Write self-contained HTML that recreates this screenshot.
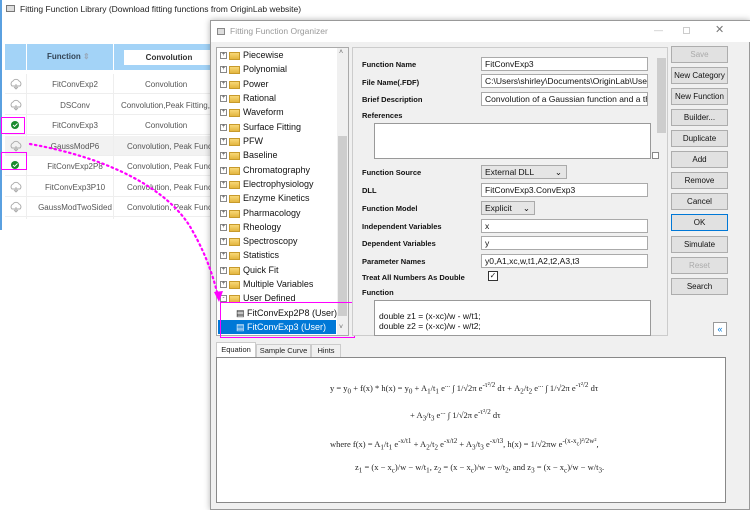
<!DOCTYPE html>
<html><head><meta charset="utf-8"><style>
*{box-sizing:border-box;margin:0;padding:0}
body{width:750px;height:510px;overflow:hidden;background:#fff;font-family:"Liberation Sans",Arial,sans-serif;font-size:8px;color:#222;position:relative}
.a{position:absolute}
.row{position:absolute;left:5px;width:210px;height:20px;border-bottom:1px solid #eee;color:#555}
.row span{position:absolute;top:6px}
.ti{position:absolute;left:220px;height:14px;font-size:9px;color:#111;line-height:14px}
.pl{display:inline-block;width:7px;height:7px;border:1px solid #888;font-size:6px;line-height:5px;text-align:center;color:#444;vertical-align:middle;margin-right:2px;background:#fff}
.fd{display:inline-block;width:11px;height:8px;background:linear-gradient(#f8d878,#e3b640);border:1px solid #c79a2c;vertical-align:middle;margin-right:3px}
.lb{position:absolute;left:362px;font-weight:bold;font-size:7.5px;color:#111}
.in{position:absolute;left:481px;width:167px;height:14px;border:1px solid #aaa;background:#fff;font-size:8.5px;padding-left:3px;line-height:12px;color:#111;white-space:nowrap;overflow:hidden}
.bt{position:absolute;left:671px;width:57px;height:17px;background:#e1e1e1;border:1px solid #adadad;font-size:8px;text-align:center;line-height:15px;color:#111;white-space:nowrap}
.mg{position:absolute;border:1.5px solid #f0f}
.eq{position:absolute;font-family:"Liberation Serif",serif;font-size:8.5px;color:#222;white-space:nowrap}
.tab{position:absolute;top:344px;height:14px;border:1px solid #ccc;border-bottom:none;font-size:7.5px;line-height:12px;text-align:center;white-space:nowrap}
</style></head><body>
<div class="a" style="left:0;top:0;width:2px;height:230px;background:#5aa0e0"></div>
<div class="a" style="left:6px;top:5px;width:9px;height:7px;border:1px solid #777;background:#ddd"></div>
<div class="a" style="left:20px;top:4px;font-size:8.5px;color:#222">Fitting Function Library (Download fitting functions from OriginLab website)</div>
<div class="a" style="left:5px;top:44px;width:210px;height:26px;background:#a3d3f7"></div>
<div class="a" style="left:26px;top:44px;width:1px;height:26px;background:#fff"></div>
<div class="a" style="left:113px;top:44px;width:1px;height:26px;background:#fff"></div>
<div class="a" style="left:47px;top:52px;font-weight:bold;color:#345">Function <span style="color:#9ab">⇕</span></div>
<div class="a" style="left:124px;top:50px;width:90px;height:15px;background:#fff;text-align:center;line-height:15px;font-weight:bold;color:#333">Convolution</div>
<div class="row" style="top:74px"><span style="left:26px;width:88px;text-align:center">FitConvExp2</span><span style="left:140px">Convolution</span></div>
<div class="row" style="top:95px"><span style="left:26px;width:88px;text-align:center">DSConv</span><span style="left:116px">Convolution,Peak Fitting,F</span></div>
<div class="row" style="top:115px"><span style="left:26px;width:88px;text-align:center">FitConvExp3</span><span style="left:140px">Convolution</span></div>
<div class="row" style="top:136px;background:#f2f2f2"><span style="left:26px;width:88px;text-align:center">GaussModP6</span><span style="left:122px">Convolution, Peak Func</span></div>
<div class="row" style="top:156px"><span style="left:26px;width:88px;text-align:center">FitConvExp2P8</span><span style="left:122px">Convolution, Peak Func</span></div>
<div class="row" style="top:177px"><span style="left:26px;width:88px;text-align:center">FitConvExp3P10</span><span style="left:122px">Convolution, Peak Func</span></div>
<div class="row" style="top:197px"><span style="left:26px;width:88px;text-align:center">GaussModTwoSided</span><span style="left:122px">Convolution, Peak Func</span></div>
<div class="a" style="left:26px;top:74px;width:1px;height:145px;background:#eee"></div>
<div class="a" style="left:113px;top:74px;width:1px;height:145px;background:#eee"></div>
<svg class="a" style="left:0;top:0" width="30" height="220">
<g fill="none" stroke="#aaa" stroke-width="0.9">
<path d="M12 86a3 3 0 0 1 1-5 3.5 3.5 0 0 1 6 0 3 3 0 0 1 1 5z M16 84v5 M14 87l2 2 2-2"/>
<path d="M12 107a3 3 0 0 1 1-5 3.5 3.5 0 0 1 6 0 3 3 0 0 1 1 5z M16 105v5 M14 108l2 2 2-2"/>
<path d="M12 148a3 3 0 0 1 1-5 3.5 3.5 0 0 1 6 0 3 3 0 0 1 1 5z M16 146v5 M14 149l2 2 2-2"/>
<path d="M12 189a3 3 0 0 1 1-5 3.5 3.5 0 0 1 6 0 3 3 0 0 1 1 5z M16 187v5 M14 190l2 2 2-2"/>
<path d="M12 209a3 3 0 0 1 1-5 3.5 3.5 0 0 1 6 0 3 3 0 0 1 1 5z M16 207v5 M14 210l2 2 2-2"/>
</g>
<circle cx="15" cy="125" r="4" fill="#1a8a2e"/><path d="M13 125l1.5 1.5 3-3" stroke="#fff" fill="none" stroke-width="0.9"/>
<circle cx="15" cy="165" r="4" fill="#1a8a2e"/><path d="M13 165l1.5 1.5 3-3" stroke="#fff" fill="none" stroke-width="0.9"/>
</svg>
<div class="mg" style="left:1px;top:117px;width:24px;height:17px"></div>
<div class="mg" style="left:1px;top:152px;width:26px;height:18px"></div>
<div class="a" style="left:210px;top:20px;width:540px;height:490px;background:#f0f0f0;border:1px solid #999;box-shadow:0 0 6px rgba(0,0,0,.3)"></div>
<div class="a" style="left:211px;top:21px;width:539px;height:21px;background:#fff"></div>
<div class="a" style="left:217px;top:28px;width:8px;height:7px;border:1px solid #888;background:#ddd"></div>
<div class="a" style="left:230px;top:26px;font-size:8.5px;color:#999">Fitting Function Organizer</div>
<div class="a" style="left:654px;top:25px;color:#bbb;font-size:9px">—</div>
<div class="a" style="left:683px;top:27px;width:7px;height:7px;border:1px solid #ccc"></div>
<div class="a" style="left:715px;top:23px;color:#777;font-size:11px">✕</div>
<div class="a" style="left:216px;top:47px;width:133px;height:289px;background:#fff;border:1px solid #aaa"></div>
<div class="a" style="left:337px;top:48px;width:11px;height:287px;background:#f0f0f0"></div>
<div class="a" style="left:338px;top:136px;width:9px;height:180px;background:#cdcdcd"></div>
<div class="a" style="left:339px;top:49px;font-size:7px;color:#666">˄</div>
<div class="a" style="left:339px;top:324px;font-size:7px;color:#666">˅</div>
<div class="ti" style="top:48px"><span class="pl">+</span><span class="fd"></span>Piecewise</div>
<div class="ti" style="top:62px"><span class="pl">+</span><span class="fd"></span>Polynomial</div>
<div class="ti" style="top:77px"><span class="pl">+</span><span class="fd"></span>Power</div>
<div class="ti" style="top:91px"><span class="pl">+</span><span class="fd"></span>Rational</div>
<div class="ti" style="top:105px"><span class="pl">+</span><span class="fd"></span>Waveform</div>
<div class="ti" style="top:120px"><span class="pl">+</span><span class="fd"></span>Surface Fitting</div>
<div class="ti" style="top:134px"><span class="pl">+</span><span class="fd"></span>PFW</div>
<div class="ti" style="top:148px"><span class="pl">+</span><span class="fd"></span>Baseline</div>
<div class="ti" style="top:163px"><span class="pl">+</span><span class="fd"></span>Chromatography</div>
<div class="ti" style="top:177px"><span class="pl">+</span><span class="fd"></span>Electrophysiology</div>
<div class="ti" style="top:191px"><span class="pl">+</span><span class="fd"></span>Enzyme Kinetics</div>
<div class="ti" style="top:206px"><span class="pl">+</span><span class="fd"></span>Pharmacology</div>
<div class="ti" style="top:220px"><span class="pl">+</span><span class="fd"></span>Rheology</div>
<div class="ti" style="top:234px"><span class="pl">+</span><span class="fd"></span>Spectroscopy</div>
<div class="ti" style="top:248px"><span class="pl">+</span><span class="fd"></span>Statistics</div>
<div class="ti" style="top:263px"><span class="pl">+</span><span class="fd"></span>Quick Fit</div>
<div class="ti" style="top:277px"><span class="pl">+</span><span class="fd"></span>Multiple Variables</div>
<div class="ti" style="top:291px"><span class="pl">-</span><span class="fd"></span>User Defined</div>
<div class="ti" style="left:236px;top:306px">▤ FitConvExp2P8 (User)</div>
<div class="a" style="left:218px;top:320px;width:118px;height:14px;background:#0078d7"></div>
<div class="ti" style="left:236px;top:320px;color:#fff">▤ FitConvExp3 (User)</div>
<div class="mg" style="left:220px;top:302px;width:135px;height:36px"></div>
<div class="a" style="left:352px;top:47px;width:316px;height:289px;background:#f0f0f0;border:1px solid #ccc"></div>
<div class="a" style="left:656px;top:48px;width:11px;height:287px;background:#f0f0f0"></div>
<div class="a" style="left:657px;top:58px;width:9px;height:75px;background:#cdcdcd"></div>
<div class="lb" style="top:60px">Function Name</div><div class="in" style="top:57px">FitConvExp3</div>
<div class="lb" style="top:78px">File Name(.FDF)</div><div class="in" style="top:74px">C:\Users\shirley\Documents\OriginLab\User F</div>
<div class="lb" style="top:95px">Brief Description</div><div class="in" style="top:92px">Convolution of a Gaussian function and a thre</div>
<div class="lb" style="top:111px">References</div>
<div class="a" style="left:374px;top:123px;width:277px;height:36px;background:#fff;border:1px solid #999"></div>
<div class="a" style="left:652px;top:152px;width:7px;height:7px;border:1px solid #888;background:#fff"></div>
<div class="lb" style="top:168px">Function Source</div><div class="in" style="top:165px;width:86px;background:#e5e5e5">External DLL <span style="float:right;margin-right:4px">⌄</span></div>
<div class="lb" style="top:186px">DLL</div><div class="in" style="top:183px">FitConvExp3.ConvExp3</div>
<div class="lb" style="top:204px">Function Model</div><div class="in" style="top:201px;width:54px;background:#e5e5e5">Explicit <span style="float:right;margin-right:4px">⌄</span></div>
<div class="lb" style="top:222px">Independent Variables</div><div class="in" style="top:219px">x</div>
<div class="lb" style="top:239px">Dependent Variables</div><div class="in" style="top:236px">y</div>
<div class="lb" style="top:257px">Parameter Names</div><div class="in" style="top:254px">y0,A1,xc,w,t1,A2,t2,A3,t3</div>
<div class="lb" style="top:273px">Treat All Numbers As Double</div>
<div class="a" style="left:488px;top:271px;width:10px;height:10px;border:1px solid #333;background:#fff;font-size:8px;line-height:8px;text-align:center">✓</div>
<div class="lb" style="top:288px">Function</div>
<div class="a" style="left:374px;top:300px;width:277px;height:36px;background:#fff;border:1px solid #999;font-size:8.5px;padding:10px 0 0 4px;line-height:10px;color:#111">double z1 = (x-xc)/w - w/t1;<br>double z2 = (x-xc)/w - w/t2;</div>
<div class="bt" style="top:46px;color:#aaa">Save</div>
<div class="bt" style="top:67px">New Category</div>
<div class="bt" style="top:88px">New Function</div>
<div class="bt" style="top:109px">Builder...</div>
<div class="bt" style="top:130px">Duplicate</div>
<div class="bt" style="top:151px">Add</div>
<div class="bt" style="top:172px">Remove</div>
<div class="bt" style="top:193px">Cancel</div>
<div class="bt" style="top:214px;border:1.5px solid #0078d7">OK</div>
<div class="bt" style="top:236px">Simulate</div>
<div class="bt" style="top:257px;color:#aaa">Reset</div>
<div class="bt" style="top:278px">Search</div>
<div class="a" style="left:713px;top:322px;width:14px;height:14px;border:1px solid #999;background:#fff;color:#0078d7;font-size:9px;text-align:center;line-height:12px">«</div>
<div class="tab" style="left:216px;top:342px;width:40px;height:16px;background:#fff;line-height:14px">Equation</div>
<div class="tab" style="left:256px;width:55px">Sample Curve</div>
<div class="tab" style="left:311px;width:30px">Hints</div>
<div class="a" style="left:216px;top:357px;width:510px;height:146px;background:#fff;border:1px solid #888"></div>
<div class="eq" style="left:330px;top:381px">y = y<sub>0</sub> + f(x) * h(x) = y<sub>0</sub> + A<sub>1</sub>/t<sub>1</sub> e<sup>...</sup> ∫ 1/√2π e<sup>-τ²/2</sup> dτ + A<sub>2</sub>/t<sub>2</sub> e<sup>...</sup> ∫ 1/√2π e<sup>-τ²/2</sup> dτ</div>
<div class="eq" style="left:410px;top:408px">+ A<sub>3</sub>/t<sub>3</sub> e<sup>...</sup> ∫ 1/√2π e<sup>-τ²/2</sup> dτ</div>
<div class="eq" style="left:330px;top:437px">where f(x) = A<sub>1</sub>/t<sub>1</sub> e<sup>-x/t1</sup> + A<sub>2</sub>/t<sub>2</sub> e<sup>-x/t2</sup> + A<sub>3</sub>/t<sub>3</sub> e<sup>-x/t3</sup>, h(x) = 1/√2πw e<sup>-(x-x<sub>c</sub>)²/2w²</sup>,</div>
<div class="eq" style="left:355px;top:462px">z<sub>1</sub> = (x − x<sub>c</sub>)/w − w/t<sub>1</sub>, z<sub>2</sub> = (x − x<sub>c</sub>)/w − w/t<sub>2</sub>, and z<sub>3</sub> = (x − x<sub>c</sub>)/w − w/t<sub>3</sub>.</div>
<svg class="a" style="left:0;top:0" width="750" height="510">
<path d="M30 144 C110 158 170 190 192 230 C208 258 214 280 218 296" fill="none" stroke="#f0f" stroke-width="2.2" stroke-dasharray="1.5 3.5" stroke-linecap="round"/>
<path d="M214 292 L219 302 L223 291 Z" fill="#f0f"/>
</svg>
</body></html>
